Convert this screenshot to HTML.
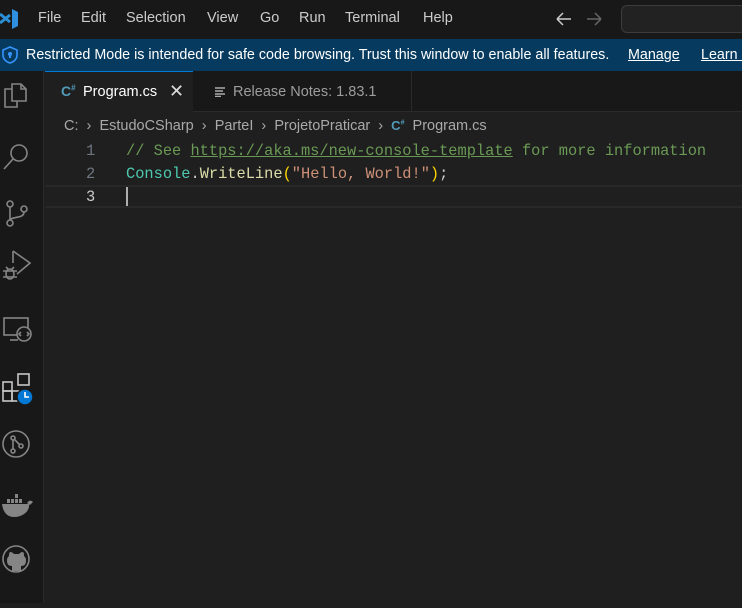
<!DOCTYPE html>
<html><head><meta charset="utf-8"><style>
*{margin:0;padding:0;box-sizing:border-box}
body{width:742px;height:603px;background:#1f1f1f;font-family:"Liberation Sans",sans-serif;overflow:hidden;position:relative;color:#ccc}
.abs{position:absolute}
#title{left:0;top:0;width:742px;height:39px;background:#181818}
.menu{top:10px;font-size:14.5px;color:#ccc}
#banner{left:0;top:39px;width:742px;height:32px;background:#063b5f;color:#fff;font-size:14.3px}
#act{left:0;top:71px;width:44px;height:532px;background:#181818;border-right:1px solid #2b2b2b}
#tabs{left:45px;top:71px;width:697px;height:41px;background:#181818;border-bottom:1px solid #2b2b2b}
.mono{font-family:"Liberation Mono",monospace;font-size:15.35px;white-space:pre}
</style></head><body>
<div id="title" class="abs">
<svg class="abs" style="left:0;top:8px" width="18" height="22" viewBox="0 0 18 22"><path d="M0 6 L10 14 M0 15 L10 7" stroke="#2b8fd6" stroke-width="3" fill="none"/><path d="M12 1 L18 4 L18 18 L12 21 Z" fill="#2f8fe0"/></svg>
<span class="abs menu" style="left:38px">File</span>
<span class="abs menu" style="left:81px">Edit</span>
<span class="abs menu" style="left:126px">Selection</span>
<span class="abs menu" style="left:207px">View</span>
<span class="abs menu" style="left:260px">Go</span>
<span class="abs menu" style="left:299px">Run</span>
<span class="abs menu" style="left:345px">Terminal</span>
<span class="abs menu" style="left:423px">Help</span>
<svg class="abs" style="left:555px;top:11px" width="50" height="16"><path d="M2 8 H16 M2 8 L8 2 M2 8 L8 14" stroke="#ccc" stroke-width="1.5" fill="none"/><path d="M32 8 H46 M46 8 L40 2 M46 8 L40 14" stroke="#666" stroke-width="1.5" fill="none"/></svg>
<div class="abs" style="left:621px;top:5px;width:130px;height:28px;border:1px solid #3c3c3c;border-radius:6px;background:#222"></div>
</div>
<div id="banner" class="abs">
<svg class="abs" style="left:2px;top:7px" width="16" height="18" viewBox="0 0 16 18"><path d="M8 1 L15 4 V9 C15 13 12 16 8 17 C4 16 1 13 1 9 V4 Z" stroke="#3794ff" stroke-width="1.6" fill="none"/><circle cx="8" cy="8" r="2" fill="#3794ff"/><rect x="7" y="8" width="2" height="4" fill="#3794ff"/></svg>
<span class="abs" style="left:26px;top:8px;white-space:nowrap">Restricted Mode is intended for safe code browsing. Trust this window to enable all features.</span>
<span class="abs" style="left:628px;top:8px;text-decoration:underline">Manage</span>
<span class="abs" style="left:701px;top:8px;text-decoration:underline;white-space:nowrap">Learn More</span>
</div>
<div id="act" class="abs">
<svg width="44" height="532" fill="none" stroke="#858585" stroke-width="1.6">
<g><path d="M12 18 h-7 v18 h12 v-6"/><path d="M12 13 h9 l5 5 v12 h-14 z"/><path d="M21 13 v5 h5"/></g>
<g><circle cx="19" cy="82" r="8"/><path d="M13 88 L4 98"/></g>
<g><circle cx="10" cy="133" r="3"/><circle cx="10" cy="152" r="3"/><circle cx="24" cy="138" r="3"/><path d="M10 136 V149 M24 141 C24 148 12 145 10 149"/></g>
<g><path d="M13 180 L30 192 L17 203"/><path d="M13 180 V192"/><ellipse cx="10" cy="203" rx="4" ry="5"/><path d="M3 200 h14 M3 206 h14 M6 196 l2 2 M14 196 l-2 2"/></g>
<g><rect x="4" y="247" width="24" height="17"/><path d="M10 269 h8"/><circle cx="24" cy="263" r="7" fill="#181818"/><path d="M21 261 l-2 2 2 2 M27 261 l2 2 -2 2"/></g>
<g stroke="#c5c5c5"><rect x="3" y="311" width="9" height="9"/><rect x="3" y="320" width="9" height="10"/><rect x="12" y="320" width="9" height="10"/><rect x="18" y="303" width="11" height="11"/></g>
<circle cx="25" cy="326" r="8" fill="#0078d4" stroke="#181818" stroke-width="1.5"/><path d="M25 321 v5 h4" stroke="#fff" stroke-width="1.6"/>
<g><circle cx="16" cy="373" r="13"/><circle cx="13" cy="367" r="2"/><circle cx="13" cy="380" r="2"/><circle cx="21" cy="375" r="2"/><path d="M13 369 V378 M14 368 L20 374"/></g>
<g fill="#858585" stroke="none"><path d="M2 433 h27 c1 7 -6 13 -15 13 c-7 0 -11 -5 -12 -13z"/><rect x="7" y="428" width="3" height="4"/><rect x="11" y="428" width="3" height="4"/><rect x="15" y="428" width="3" height="4"/><rect x="15" y="423" width="3" height="4"/><rect x="19" y="428" width="3" height="4"/><path d="M27 432 c2 -3 4 -3 6 -1 l-3 3z"/></g>
<g><circle cx="16" cy="488" r="13"/><path fill="#858585" stroke="none" d="M12 500 v-5 c-4 0-5-2-5-6 c0-2 1-3 2-4 c0-2 0-3 1-4 c2 0 3 1 4 2 h5 c1-1 2-2 4-2 c1 1 1 2 1 4 c1 1 2 2 2 4 c0 4-1 6-5 6 v5z"/></g>
</svg>
</div>
<div id="tabs" class="abs">
<div class="abs" style="left:0;top:0;width:148px;height:41px;background:#1f1f1f;border-top:1px solid #0078d4"></div>
<span class="abs" style="left:16px;top:12px;color:#519aba;font-weight:bold;font-size:14px">C<sup style="font-size:8px">#</sup></span>
<span class="abs" style="left:38px;top:13px;color:#fff;font-size:14.5px">Program.cs</span>
<span class="abs" style="left:124px;top:10px;color:#ddd;font-size:18px">✕</span>
<div class="abs" style="left:148px;top:0;width:219px;height:41px;border-right:1px solid #2b2b2b"></div>
<svg class="abs" style="left:170px;top:16px" width="12" height="10"><path d="M0 1h10M0 4h8M0 7h10M0 9.5h6" stroke="#aaa" stroke-width="1.4"/></svg>
<span class="abs" style="left:188px;top:13px;color:#9d9d9d;font-size:14.5px">Release Notes: 1.83.1</span>
</div>
<div class="abs" style="left:64px;top:118px;font-size:14.5px;color:#a9a9a9;white-space:pre">C:  ›  EstudoCSharp  ›  PartеI  ›  ProjetoPraticar  ›  <span style="color:#519aba;font-weight:bold;font-size:13px">C<sup style="font-size:7px">#</sup></span>  Program.cs</div>
<div class="abs" style="left:45px;top:185px;width:697px;height:23px;border-top:2px solid #282828;border-bottom:2px solid #282828"></div>
<div class="abs mono" style="left:86px;top:140px;line-height:23px;color:#6e7681">1
2
<span style="color:#ccc">3</span></div>
<div class="abs mono" style="left:126px;top:140px;line-height:23px;color:#6a9955">// See <span style="text-decoration:underline">https://aka.ms/new-console-template</span> for more information
<span style="color:#4ec9b0">Console</span><span style="color:#ccc">.</span><span style="color:#dcdcaa">WriteLine</span><span style="color:#ffd700">(</span><span style="color:#ce9178">"Hello, World!"</span><span style="color:#ffd700">)</span><span style="color:#ccc">;</span></div>
<div class="abs" style="left:126px;top:187px;width:2px;height:19px;background:#aeafad"></div>
</body></html>
